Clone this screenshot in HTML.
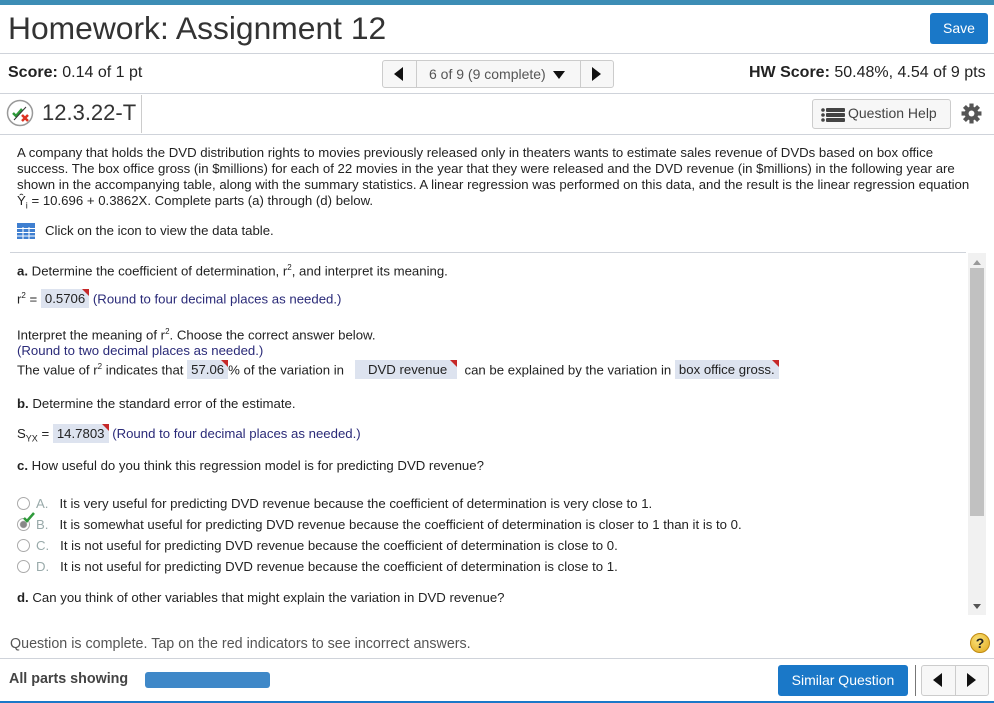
<!DOCTYPE html>
<html><head><meta charset="utf-8"><style>
*{margin:0;padding:0;box-sizing:border-box}
body{width:994px;height:703px;overflow:hidden;background:#fff;font-family:"Liberation Sans",Arial,sans-serif;color:#222;position:relative}
.a{position:absolute;white-space:nowrap}
.hl{position:absolute;height:1px;background:#cfd3da}
.t{font-size:13.2px}
.nv{color:#2a2a78}
.box{background:#dde3ef;padding:2px 4px;position:relative}
.box:after{content:"";position:absolute;right:0;top:0;border-top:7px solid #c62828;border-left:7px solid transparent}
.rad{position:absolute;width:13px;height:13px;border:1px solid #aaa;border-radius:50%}
.lt{color:#9aa}
</style></head><body>
<div class="a" style="left:0;top:0;width:994px;height:5px;background:#3c8db5"></div>
<div class="a" style="left:8px;top:10px;font-size:31.8px;color:#333">Homework: Assignment 12</div>
<div class="a" style="left:930px;top:13px;width:58px;height:31px;background:#1a78c8;border-radius:3px;color:#fff;font-size:14px;text-align:center;line-height:31px">Save</div>
<div class="hl" style="left:0;top:53px;width:994px"></div>
<div class="a" style="left:8px;top:64px;font-size:16px"><b>Score:</b> 0.14 of 1 pt</div>
<div class="a" style="left:382px;top:60px;width:232px;height:28px;border:1px solid #ccc;border-radius:3px;background:#f7f7f7"></div>
<div class="a" style="left:416px;top:61px;width:1px;height:26px;background:#ccc"></div>
<div class="a" style="left:580px;top:61px;width:1px;height:26px;background:#ccc"></div>
<div class="a" style="left:394px;top:67px;border-right:9px solid #111;border-top:7px solid transparent;border-bottom:7px solid transparent"></div>
<div class="a" style="left:592px;top:67px;border-left:9px solid #111;border-top:7px solid transparent;border-bottom:7px solid transparent"></div>
<div class="a" style="left:429px;top:66px;font-size:14px;color:#555">6 of 9 (9 complete)</div>
<div class="a" style="left:553px;top:71px;border-top:8px solid #111;border-left:6px solid transparent;border-right:6px solid transparent"></div>
<div class="a" style="left:749px;top:64px;font-size:16px"><b>HW Score:</b> 50.48%, 4.54 of 9 pts</div>
<div class="hl" style="left:0;top:93px;width:994px"></div>
<svg class="a" style="left:6px;top:99px" width="30" height="30" viewBox="0 0 30 30"><circle cx="14" cy="14" r="12.5" fill="#fff" stroke="#999" stroke-width="1.5"/><path d="M7 14l3 3 6-7" stroke="#2e9a3a" stroke-width="2.5" fill="none"/><path d="M8 21L20 8" stroke="#333" stroke-width="1"/><path d="M16 16l6 6M22 16l-6 6" stroke="#d32" stroke-width="2.5"/></svg>
<div class="a" style="left:42px;top:100px;font-size:22px;color:#333">12.3.22-T</div>
<div class="a" style="left:141px;top:95px;width:1px;height:38px;background:#ccc"></div>
<div class="a" style="left:812px;top:99px;width:139px;height:30px;border:1px solid #ccc;border-radius:3px;background:#f7f7f7"></div>
<svg class="a" style="left:821px;top:108px" width="24" height="14"><g fill="#444"><circle cx="2" cy="2" r="1.8"/><circle cx="2" cy="7" r="1.8"/><circle cx="2" cy="12" r="1.8"/><rect x="5" y="0" width="19" height="4" rx="1"/><rect x="5" y="5" width="19" height="4" rx="1"/><rect x="5" y="10" width="19" height="4" rx="1"/></g></svg>
<div class="a" style="left:848px;top:105px;font-size:14px;color:#444">Question Help</div>
<svg class="a" style="left:961px;top:103px" width="21" height="21" viewBox="0 0 20 20"><g fill="#555"><circle cx="10" cy="10" r="6.5"/><rect x="8" y="0.5" width="4" height="19"/><rect x="8" y="0.5" width="4" height="19" transform="rotate(45 10 10)"/><rect x="8" y="0.5" width="4" height="19" transform="rotate(90 10 10)"/><rect x="8" y="0.5" width="4" height="19" transform="rotate(135 10 10)"/></g><circle cx="10" cy="10" r="2.8" fill="#fff"/></svg>
<div class="hl" style="left:0;top:134px;width:994px"></div>
<div class="a t" style="left:17px;top:145px;line-height:16px;white-space:normal;width:955px">A company that holds the DVD distribution rights to movies previously released only in theaters wants to estimate sales revenue of DVDs based on box office<br>success. The box office gross (in $millions) for each of 22 movies in the year that they were released and the DVD revenue (in $millions) in the following year are<br>shown in the accompanying table, along with the summary statistics. A linear regression was performed on this data, and the result is the linear regression equation<br>Ŷ<sub style="font-size:9px">i</sub> = 10.696 + 0.3862X. Complete parts (a) through (d) below.</div>
<svg class="a" style="left:17px;top:223px" width="18" height="16"><rect x="0" y="0" width="18" height="16" fill="#3f7fd0"/><g stroke="#fff" stroke-width="1"><path d="M0 5.5h18M0 9.5h18M0 13h18M6 4v12M12 4v12"/></g></svg>
<div class="a t" style="left:45px;top:223px">Click on the icon to view the data table.</div>
<div class="hl" style="left:10px;top:252px;width:956px"></div>
<div class="a" style="left:968px;top:253px;width:18px;height:362px;background:#f1f1f1"></div>
<div class="a" style="left:970px;top:268px;width:14px;height:248px;background:#c1c1c1"></div>
<div class="a" style="left:973px;top:260px;border-bottom:5px solid #999;border-left:4px solid transparent;border-right:4px solid transparent"></div>
<div class="a" style="left:973px;top:604px;border-top:5px solid #555;border-left:4px solid transparent;border-right:4px solid transparent"></div>
<div class="a t" style="left:17px;top:263px"><b>a.</b> Determine the coefficient of determination, r<sup style="font-size:8px">2</sup>, and interpret its meaning.</div>
<div class="a t" style="left:17px;top:291px">r<sup style="font-size:8px">2</sup> = <span class="box">0.5706</span> <span class="nv">(Round to four decimal places as needed.)</span></div>
<div class="a t" style="left:17px;top:327px">Interpret the meaning of r<sup style="font-size:8px">2</sup>. Choose the correct answer below.</div>
<div class="a t nv" style="left:17px;top:343px">(Round to two decimal places as needed.)</div>
<div class="a t" style="left:17px;top:362px">The value of r<sup style="font-size:8px">2</sup> indicates that <span class="box">57.06</span>% of the variation in &nbsp;&nbsp;<span class="box" style="padding:2px 10px 2px 13px">DVD revenue</span>&nbsp; can be explained by the variation in <span class="box">box office gross.</span></div>
<div class="a t" style="left:17px;top:396px"><b>b.</b> Determine the standard error of the estimate.</div>
<div class="a t" style="left:17px;top:426px">S<sub style="font-size:9px">YX</sub> = <span class="box">14.7803</span> <span class="nv">(Round to four decimal places as needed.)</span></div>
<div class="a t" style="left:17px;top:458px"><b>c.</b> How useful do you think this regression model is for predicting DVD revenue?</div>
<div class="rad" style="left:17px;top:497px"></div>
<div class="rad" style="left:17px;top:518px;background:radial-gradient(circle,#888 3px,#fff 4px)"></div>
<svg class="a" style="left:22px;top:512px" width="14" height="12"><path d="M2 6l3 3 7-8" stroke="#2e9a3a" stroke-width="2.5" fill="none"/></svg>
<div class="rad" style="left:17px;top:539px"></div>
<div class="rad" style="left:17px;top:560px"></div>
<div class="a t" style="left:36px;top:496px"><span class="lt">A.</span>&nbsp;&nbsp; It is very useful for predicting DVD revenue because the coefficient of determination is very close to 1.</div>
<div class="a t" style="left:36px;top:517px"><span class="lt">B.</span>&nbsp;&nbsp; It is somewhat useful for predicting DVD revenue because the coefficient of determination is closer to 1 than it is to 0.</div>
<div class="a t" style="left:36px;top:538px"><span class="lt">C.</span>&nbsp;&nbsp; It is not useful for predicting DVD revenue because the coefficient of determination is close to 0.</div>
<div class="a t" style="left:36px;top:559px"><span class="lt">D.</span>&nbsp;&nbsp; It is not useful for predicting DVD revenue because the coefficient of determination is close to 1.</div>
<div class="a t" style="left:17px;top:590px"><b>d.</b> Can you think of other variables that might explain the variation in DVD revenue?</div>
<div class="a" style="left:10px;top:636px;font-size:14.3px;color:#555">Question is complete. Tap on the red indicators to see incorrect answers.</div>
<div class="a" style="left:970px;top:633px;width:20px;height:20px;border-radius:50%;background:radial-gradient(circle at 40% 35%,#fbe27a,#e0a81c);border:1px solid #c08a10;text-align:center;font-weight:bold;font-size:14px;line-height:19px;color:#222">?</div>
<div class="hl" style="left:0;top:658px;width:994px"></div>
<div class="a" style="left:9px;top:671px;font-size:14.3px;font-weight:bold;color:#444">All parts showing</div>
<div class="a" style="left:145px;top:672px;width:125px;height:16px;background:#3f88c8;border-radius:3px"></div>
<div class="a" style="left:778px;top:665px;width:130px;height:31px;background:#1a78c8;border-radius:3px;color:#fff;font-size:14px;text-align:center;line-height:31px">Similar Question</div>
<div class="a" style="left:915px;top:665px;width:1px;height:31px;background:#777"></div>
<div class="a" style="left:921px;top:665px;width:68px;height:31px;border:1px solid #ccc;border-radius:3px;background:#f7f7f7"></div>
<div class="a" style="left:955px;top:666px;width:1px;height:29px;background:#ccc"></div>
<div class="a" style="left:933px;top:673px;border-right:9px solid #111;border-top:7px solid transparent;border-bottom:7px solid transparent"></div>
<div class="a" style="left:967px;top:673px;border-left:9px solid #111;border-top:7px solid transparent;border-bottom:7px solid transparent"></div>
<div class="a" style="left:0;top:701px;width:994px;height:2px;background:#1a78c8"></div>
</body></html>
